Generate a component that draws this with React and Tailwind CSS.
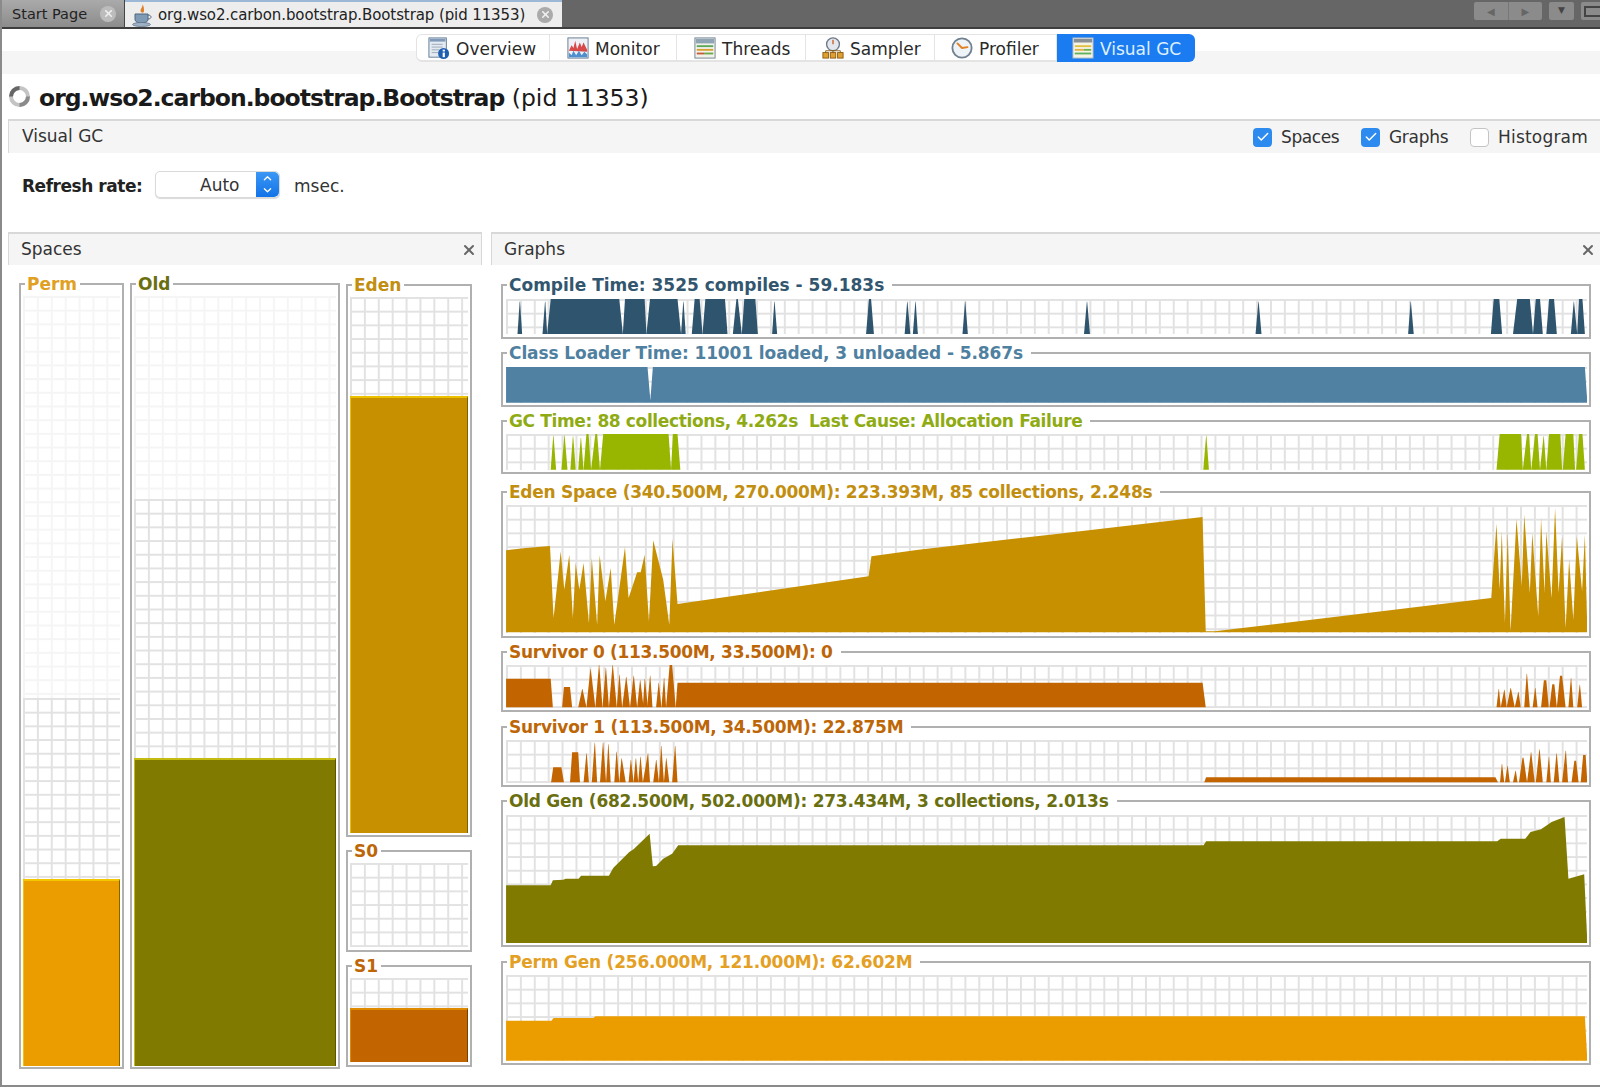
import React from 'react';
import { X, ChevronUp, ChevronDown, Check } from 'lucide-react';

const FONT = "font-['DejaVu_Sans',sans-serif]";
const GRID = 'bg-[linear-gradient(#e2e2e2_1.5px,transparent_1.5px),linear-gradient(90deg,#e2e2e2_1.5px,transparent_1.5px)] [background-size:13.9px_13.7px]';
const GRID_FADED = 'bg-[linear-gradient(#f5f5f5_1.5px,transparent_1.5px),linear-gradient(90deg,#f5f5f5_1.5px,transparent_1.5px)] [background-size:13.9px_13.7px]';

// chart x values were read off two crops of the plot, left half and right half
const L = (x) => x / 2.8 - 16;
const R = (x) => x / 2.851 + 544;

const trapezoids = (list, toX, y0, y1) =>
    list.map(([a, b, c, d, top]) => {
        const h = y1 - y0;
        const t = top - y0;
        return `${toX(a)},${h / 3} ${toX(b)},${t / 3} ${toX(c)},${t / 3} ${toX(d)},${h / 3}`;
    });

const outline = (left, right, y0, y1) => {
    const pts = [...left.map(([x, y]) => [L(x), y]), ...right.map(([x, y]) => [R(x), y])];
    const h = (y1 - y0) / 3;
    return [`${pts[0][0]},${h} ` + pts.map(([x, y]) => `${x},${(y - y0) / 3}`).join(' ') + ` ${pts[pts.length - 1][0]},${h}`];
};

const compile = [
    ...trapezoids([
        [77, 83, 84, 90, 95], [147, 154, 155, 160, 95], [160, 170, 362, 372, 87], [372, 378, 433, 438, 87],
        [438, 448, 525, 535, 87], [535, 541, 542, 548, 95], [565, 573, 587, 595, 87], [595, 603, 658, 665, 87],
        [680, 690, 694, 705, 87], [705, 712, 743, 750, 87], [790, 796, 797, 804, 95], [1053, 1061, 1067, 1075, 87],
        [1161, 1168, 1169, 1177, 95], [1184, 1191, 1192, 1198, 95], [1323, 1330, 1331, 1338, 95],
    ], L, 87, 192),
    ...trapezoids([
        [97, 105, 106, 114, 95], [586, 594, 595, 603, 95], [1021, 1028, 1029, 1037, 95], [1257, 1265, 1281, 1289, 87],
        [1320, 1332, 1368, 1377, 87], [1377, 1385, 1397, 1405, 87], [1415, 1423, 1437, 1445, 87],
        [1485, 1493, 1494, 1503, 95], [1503, 1508, 1518, 1525, 87],
    ], R, 87, 192),
];

const classLoader = outline(
    [[45, 290], [441, 290], [449, 390], [456, 290]],
    [[1525, 290], [1532, 397]],
    290, 397,
);

const gcTime = [
    ...trapezoids([
        [170, 177, 178, 185, 498], [200, 208, 209, 217, 497], [225, 232, 233, 240, 500], [247, 254, 255, 262, 505],
        [262, 270, 276, 283, 493], [283, 295, 300, 308, 493], [308, 317, 500, 507, 493], [507, 512, 525, 533, 493],
    ], L, 493, 600),
    ...trapezoids([
        [437, 445, 446, 453, 498], [1273, 1282, 1343, 1348, 493], [1348, 1360, 1366, 1372, 493], [1372, 1383, 1390, 1397, 493],
        [1397, 1407, 1408, 1415, 500], [1415, 1423, 1455, 1460, 493], [1462, 1470, 1492, 1497, 493], [1500, 1508, 1518, 1525, 493],
    ], R, 493, 600),
];

const eden = outline(
    [[45, 842], [100, 835], [168, 829], [178, 1045], [198, 845], [208, 960], [222, 855], [232, 1045], [240, 880], [250, 960],
     [262, 880], [277, 1060], [285, 865], [300, 1065], [307, 857], [323, 995], [338, 895], [348, 1065], [378, 832], [388, 985],
     [412, 908], [422, 908], [433, 855], [445, 1055], [457, 812], [485, 930], [502, 1065], [511, 808], [525, 1003],
     [1060, 920], [1068, 860], [1200, 840]],
    [[0, 795], [435, 742], [444, 1085], [470, 1085], [1258, 985], [1273, 762], [1282, 960], [1288, 785], [1297, 1060], [1305, 785],
     [1313, 1085], [1330, 748], [1345, 950], [1352, 735], [1368, 970], [1375, 790], [1392, 1040], [1400, 745], [1410, 970], [1415, 785],
     [1430, 985], [1440, 715], [1450, 970], [1460, 800], [1470, 1075], [1480, 870], [1492, 1050], [1502, 800], [1517, 965], [1525, 795], [1532, 1088]],
    706, 1088,
);

const spike = (a, p, d, top) => [a, p, p + 1, d, top];

const survivor0 = [
    ...trapezoids([
        [45, 45, 170, 176, 117], [202, 207, 224, 230, 142], spike(247, 258, 270, 148), spike(270, 281, 295, 88),
        spike(295, 305, 315, 76), spike(315, 324, 333, 85), spike(333, 343, 355, 76), spike(355, 362, 370, 105),
        spike(370, 381, 392, 112), spike(392, 402, 412, 108), spike(412, 420, 430, 122), spike(428, 433, 442, 118),
        spike(440, 448, 455, 108), spike(465, 472, 480, 130), spike(480, 487, 493, 115), [493, 503, 510, 520, 76],
    ], L, 76, 203),
    `${L(520)},42.3 ${L(525)},17.7 ${R(435)},17.7 ${R(444)},42.3`,
    ...trapezoids([
        spike(1273, 1279, 1285, 148), spike(1285, 1295, 1302, 150), spike(1302, 1313, 1325, 145), spike(1325, 1335, 1342, 157),
        spike(1352, 1359, 1368, 102), spike(1376, 1383, 1390, 145), [1400, 1408, 1415, 1422, 122], [1424, 1432, 1438, 1445, 134],
        [1445, 1454, 1460, 1470, 108], spike(1478, 1485, 1492, 115), spike(1503, 1510, 1517, 135),
    ], R, 76, 203),
];

const survivor1 = [
    ...trapezoids([
        [171, 177, 200, 207, 382], [224, 230, 247, 252, 337], spike(262, 270, 277, 340), spike(285, 293, 300, 308),
        spike(308, 316, 325, 308), spike(325, 331, 338, 313), spike(348, 354, 362, 335), spike(362, 368, 380, 355),
        spike(388, 394, 402, 360), spike(402, 408, 415, 355), spike(415, 421, 428, 350), spike(428, 442, 448, 340),
        spike(457, 465, 473, 360), spike(473, 479, 487, 318), spike(487, 493, 502, 355), spike(510, 518, 525, 318),
    ], L, 300, 427),
    ...trapezoids([
        [440, 445, 1270, 1277, 412], spike(1283, 1288, 1295, 372), spike(1297, 1304, 1311, 378), spike(1320, 1327, 1333, 392),
        [1337, 1347, 1350, 1360, 353], spike(1360, 1371, 1382, 337), spike(1385, 1395, 1405, 328), spike(1415, 1422, 1428, 352),
        spike(1436, 1444, 1452, 340), spike(1460, 1470, 1477, 332), [1487, 1495, 1500, 1507, 362], [1513, 1520, 1527, 1532, 345],
    ], R, 300, 427),
];

const oldGen = outline(
    [[45, 735], [170, 735], [176, 720], [205, 718], [212, 715], [248, 715], [255, 706], [333, 706], [345, 683], [390, 635],
     [402, 627], [447, 580], [456, 678], [465, 677], [485, 655], [510, 640], [527, 615]],
    [[438, 615], [445, 603], [1275, 603], [1285, 595], [1355, 595], [1370, 575], [1400, 567], [1430, 545], [1467, 530], [1478, 715], [1523, 702], [1532, 908]],
    524, 908,
);

const permGen = outline(
    [[45, 1142], [172, 1142], [178, 1134], [290, 1134], [295, 1129]],
    [[1525, 1129], [1532, 1262]],
    1005, 1262,
);

const charts = [
    { label: 'Compile Time: 3525 compiles - 59.183s', text: 'text-[#33566f]', fill: '#2f556e', box: 'h-[55px]', pad: 'pt-[13px]', plot: 'h-[35px]', height: 35, shapes: compile },
    { label: 'Class Loader Time: 11001 loaded, 3 unloaded - 5.867s', text: 'text-[#4f80a0] tracking-[-0.1px]', fill: '#5081a3', box: 'h-[55px] mt-[13px]', pad: 'pt-[13px]', plot: 'h-[36px]', height: 36, shapes: classLoader },
    { label: 'GC Time: 88 collections, 4.262s  Last Cause: Allocation Failure', text: 'text-[#8fab14] tracking-[-0.37px]', fill: '#98b500', box: 'h-[54px] mt-[13px]', pad: 'pt-[12px]', plot: 'h-[36px]', height: 36, shapes: gcTime },
    { label: 'Eden Space (340.500M, 270.000M): 223.393M, 85 collections, 2.248s', text: 'text-[#c28e10] tracking-[-0.28px]', fill: '#c79000', box: 'h-[147px] mt-[17px]', pad: 'pt-[12px]', plot: 'h-[128px]', height: 128, shapes: eden },
    { label: 'Survivor 0 (113.500M, 33.500M): 0', text: 'text-[#bd6608] tracking-[-0.31px]', fill: '#c26500', box: 'h-[61px] mt-[13px]', pad: 'pt-[12px]', plot: 'h-[43px]', height: 43, shapes: survivor0 },
    { label: 'Survivor 1 (113.500M, 34.500M): 22.875M', text: 'text-[#bd6608] tracking-[-0.26px]', fill: '#c26500', box: 'h-[61px] mt-[14px]', pad: 'pt-[12px]', plot: 'h-[43px]', height: 43, shapes: survivor1 },
    { label: 'Old Gen (682.500M, 502.000M): 273.434M, 3 collections, 2.013s', text: 'text-[#6a6f10] tracking-[-0.25px]', fill: '#807b00', box: 'h-[147px] mt-[13px]', pad: 'pt-[13px]', plot: 'h-[128px]', height: 128, shapes: oldGen },
    { label: 'Perm Gen (256.000M, 121.000M): 62.602M', text: 'text-[#e4a024] tracking-[-0.21px]', fill: '#eb9d00', box: 'h-[104px] mt-[14px]', pad: 'pt-[12px]', plot: 'h-[86px]', height: 86, shapes: permGen },
];

const GraphBox = ({ label, text, fill, box, pad, plot, height, shapes }) => (
    <div className={`relative border-2 border-[#b0b0b0] pl-[3px] ${pad} ${box}`}>
        <span className={`absolute left-[4px] -top-[11px] h-[20px] bg-white pl-[2px] pr-[8px] text-[17px] leading-[20px] font-bold whitespace-pre ${text}`}>
            {label}
        </span>
        <div className={`relative w-[1081px] ${plot} ${GRID}`}>
            <svg width="1081" height={height} viewBox={`0 0 1081 ${height}`} className="absolute inset-0">
                {shapes.map((points, i) => (
                    <polygon key={i} points={points} fill={fill} />
                ))}
            </svg>
        </div>
    </div>
);

const SpaceBox = ({ label, text, box, faded, fill, fillClass, fillH, pb = 'pb-[1px]' }) => (
    <div className={`relative border-2 border-[#b0b0b0] pt-[11px] pl-[2px] pr-[2px] flex flex-col ${pb} ${box}`}>
        <span className={`absolute left-[4px] -top-[11px] h-[20px] bg-white pl-[2px] pr-[3px] text-[17px] leading-[20px] font-bold ${text}`}>
            {label}
        </span>
        <div className="flex flex-col flex-1">
            {faded && <div className={`shrink-0 ${faded} ${GRID_FADED}`} />}
            <div className={`flex-1 ${GRID}`} />
            {fill && <div className={`shrink-0 border-t-2 border-l border-r ${fillH} ${fillClass}`} />}
        </div>
    </div>
);

const IconOverview = () => (
    <svg width="22" height="22" viewBox="0 0 24 24">
        <rect x="1" y="1" width="19" height="21" fill="#e4eaf2" stroke="#5f7893" />
        <rect x="2" y="2" width="17" height="3" fill="#7e9ab8" />
        <path d="M4 8h12M4 11h12M4 14h8M4 17h7" stroke="#9aa6b4" />
        <circle cx="17" cy="18" r="6" fill="#1f5fb0" />
        <rect x="16" y="17" width="2.4" height="5" fill="#fff" />
        <rect x="16" y="13.8" width="2.4" height="2" fill="#fff" />
    </svg>
);

const IconMonitor = () => (
    <svg width="22" height="22" viewBox="0 0 24 24">
        <rect x="1" y="1" width="22" height="22" fill="#eef2f7" stroke="#60758c" />
        <path d="M2 15 5 9l2 3 2-8 2 9 3-7 2 5 2-5 4 8v2z" fill="#d8494a" />
        <path d="M2 22v-5l3 3 2-5 3 5 3-5 3 5 3-4 3 3v3z" fill="#4f8fd0" />
    </svg>
);

const IconThreads = () => (
    <svg width="22" height="22" viewBox="0 0 24 24">
        <rect x="1" y="1" width="22" height="22" fill="#f2f2ea" stroke="#6d7d8c" />
        <rect x="2" y="2" width="20" height="5" fill="#8fa4b4" />
        <path d="M3 10h18" stroke="#5aa65a" strokeWidth="2" />
        <path d="M3 14h18" stroke="#d8a030" strokeWidth="2" />
        <path d="M3 18h8" stroke="#c85a3a" strokeWidth="2" />
        <path d="M11 18h10" stroke="#6aa84a" strokeWidth="2" />
    </svg>
);

const IconSampler = () => (
    <svg width="22" height="22" viewBox="0 0 24 24">
        <circle cx="12" cy="8" r="7" fill="#e4e8ee" stroke="#6d7a88" strokeWidth="1.5" />
        <path d="M12 3v5" stroke="#c8602a" strokeWidth="1.5" />
        <rect x="1" y="17" width="6" height="6" fill="#e0a030" stroke="#8a5a10" />
        <rect x="9" y="17" width="6" height="6" fill="#e0a030" stroke="#8a5a10" />
        <rect x="17" y="17" width="6" height="6" fill="#e0a030" stroke="#8a5a10" />
        <path d="M4 17v-2h16v2M12 15v2" stroke="#8a5a10" fill="none" />
    </svg>
);

const IconProfiler = () => (
    <svg width="22" height="22" viewBox="0 0 24 24">
        <circle cx="12" cy="12" r="10.5" fill="#eef3f8" stroke="#70808f" strokeWidth="2" />
        <path d="M12 12 7 7M12 12l6-1" stroke="#e08020" strokeWidth="2" strokeLinecap="round" />
    </svg>
);

const IconVisualGc = () => (
    <svg width="22" height="22" viewBox="0 0 24 24">
        <rect x="1" y="1" width="22" height="22" fill="#f5f3e4" stroke="#9fb4c8" />
        <rect x="2" y="2" width="20" height="4" fill="#8a8f94" />
        <path d="M3 10h18" stroke="#e0c040" strokeWidth="2" />
        <path d="M3 14h10" stroke="#e0b040" strokeWidth="2" />
        <path d="M13 14h8" stroke="#70b050" strokeWidth="2" />
        <path d="M3 18h18" stroke="#60b060" strokeWidth="2" />
    </svg>
);

const IconJava = () => (
    <svg width="22" height="24" viewBox="0 0 22 24" className="shrink-0">
        <path d="M11 1c2 3-3 5-1 8 1 1 3 1 3-1 0-3 0-5-2-7z" fill="#e0802a" />
        <path d="M4 11h13v5c0 3-3 4-6.500 4S4 19 4 16z" fill="#7f9ab4" stroke="#4d667e" />
        <path d="M17 12c4 0 4 4 0 4" fill="none" stroke="#4d667e" />
        <ellipse cx="10.500" cy="21.500" rx="9" ry="2" fill="#9fb2c4" stroke="#5a7088" strokeWidth="0.7" />
    </svg>
);

const CloseDot = ({ className }) => (
    <span className={`flex shrink-0 items-center justify-center w-[16px] h-[16px] rounded-full ${className}`}>
        <X size={11} strokeWidth={3.5} color="#f0f0f0" />
    </span>
);

const ViewTab = ({ icon, label, className, active }) => (
    <div className={`flex items-center gap-[6px] h-[28px] ${active ? 'bg-[#1a7cf0] text-[#dff0ff] rounded-r-[6px]' : 'bg-white text-[#2a2a2a] border-r border-b-2 border-t border-[#e4e4e4]'} ${className}`}>
        {icon}
        <span className="pt-[4px] text-[17px]">{label}</span>
    </div>
);

const CheckOption = ({ label, checked, className }) => (
    <div className={`flex items-center gap-[9px] ${className}`}>
        {checked ? (
            <span className="flex items-center justify-center w-[19px] h-[19px] rounded-[4px] bg-[#2d8bf0]">
                <Check size={14} strokeWidth={2.5} color="#fff" />
            </span>
        ) : (
            <span className="w-[19px] h-[19px] rounded-[4px] bg-white border border-[#c4c4c4]" />
        )}
        <span className="pt-[2px] text-[17px] text-[#333]">{label}</span>
    </div>
);

const App = () => {
    return (
        <div className={`relative w-[1600px] h-[1087px] overflow-hidden bg-white border-l-2 border-b-2 border-[#8a8a8a] ${FONT}`}>
            {/* window tabs */}
            <div className="flex h-[29px] -ml-[2px] w-[1600px] bg-[#666666] border-b-2 border-[#3e3e3e]">
                <div className="flex items-center w-[125px] pl-[12px] bg-[linear-gradient(#aaaaaa,#8c8c8c)] border-r border-[#444]">
                    <span className="w-[88px] pt-[2px] text-[14.500px] text-[#222]">Start Page</span>
                    <CloseDot className="bg-[#bcbcbc]" />
                </div>
                <div className="flex items-center w-[437px] pl-[6px] bg-[#ededed] border-t-2 border-[#9db8d6]">
                    <IconJava />
                    <span className="shrink-0 w-[379px] pt-[1px] ml-[5px] text-[15px] tracking-[-0.1px] text-[#222] whitespace-nowrap">org.wso2.carbon.bootstrap.Bootstrap (pid 11353)</span>
                    <CloseDot className="bg-[#aaaaaa]" />
                </div>
                <div className="flex-1 flex justify-end pt-[2px] gap-[7px]">
                    <div className="flex w-[68px] h-[18px] rounded-[2px] bg-[#8b8b8b]">
                        <span className="flex-1 flex items-center justify-center border-r border-[#777] text-[#666] text-[10px]">◀</span>
                        <span className="flex-1 flex items-center justify-center text-[#666] text-[10px]">▶</span>
                    </div>
                    <div className="flex items-center justify-center w-[25px] h-[18px] rounded-[2px] bg-[#8b8b8b] text-[#444] text-[9px]">▼</div>
                    <div className="flex items-center justify-center w-[19px] h-[18px] rounded-l-[2px] bg-[#8b8b8b] pl-[3px]">
                        <span className="w-full h-[11px] border-2 border-[#444] border-r-0" />
                    </div>
                </div>
            </div>

            {/* view switcher */}
            <div className="h-[45px] -ml-[2px] bg-[linear-gradient(#ffffff_22px,#f5f5f5_22px)] pl-[416px] pt-[5px]">
                <div className="flex">
                    <ViewTab icon={<IconOverview />} label="Overview" className="w-[134px] pl-[11px] rounded-l-[6px] border-l" />
                    <ViewTab icon={<IconMonitor />} label="Monitor" className="w-[127px] pl-[17px]" />
                    <ViewTab icon={<IconThreads />} label="Threads" className="w-[129px] pl-[17px]" />
                    <ViewTab icon={<IconSampler />} label="Sampler" className="w-[129px] pl-[16px]" />
                    <ViewTab icon={<IconProfiler />} label="Profiler" className="w-[122px] pl-[16px]" />
                    <ViewTab icon={<IconVisualGc />} label="Visual GC" className="w-[138px] pl-[15px]" active />
                </div>
            </div>

            {/* title */}
            <div className="flex items-center h-[45px] pl-[6px]">
                <svg width="23" height="23" viewBox="0 0 23 23">
                    <circle cx="11.500" cy="11.500" r="8.500" fill="none" stroke="#c4c4c4" strokeWidth="4" />
                    <path d="M3 11.500a8.500 8.500 0 0 1 8.500-8.500" fill="none" stroke="#666" strokeWidth="4" />
                    <path d="M11.500 20a8.500 8.500 0 0 0 8.500-8.500" fill="none" stroke="#8a8a8a" strokeWidth="4" />
                </svg>
                <span className="ml-[8px] pt-[4px] text-[23.500px] text-[#1a1a1a] whitespace-pre">
                    <span className="font-bold tracking-[-1px]">org.wso2.carbon.bootstrap.Bootstrap</span> (pid 11353)
                </span>
            </div>

            {/* section header */}
            <div className="flex items-center justify-between h-[34px] ml-[6px] pl-[13px] bg-[#f5f5f5] border-t-2 border-l border-[#d8d8d8]">
                <span className="text-[17px] text-[#333]">Visual GC</span>
                <div className="flex">
                    <CheckOption label="Spaces" checked className="w-[108px] tracking-[-0.4px]" />
                    <CheckOption label="Graphs" checked className="w-[109px] tracking-[-0.3px]" />
                    <CheckOption label="Histogram" className="w-[130px] tracking-[0.2px]" />
                </div>
            </div>

            {/* refresh rate */}
            <div className="flex items-center h-[79px] pl-[20px] pb-[17px]">
                <span className="w-[133px] pt-[5px] text-[17px] font-bold tracking-[-0.47px] text-[#222]">Refresh rate:</span>
                <div className="flex w-[125px] h-[27px] rounded-[5px] bg-white border border-[#dadada] shadow-[0_1px_1px_rgba(0,0,0,0.15)]">
                    <span className="flex-1 pl-[44px] text-[17px] leading-[26px] text-[#333]">Auto</span>
                    <span className="flex flex-col items-center justify-center w-[23px] rounded-r-[5px] bg-[linear-gradient(#3c97f5,#1273e8)]">
                        <ChevronUp size={13} strokeWidth={2.5} color="#fff" />
                        <ChevronDown size={13} strokeWidth={2.5} color="#fff" />
                    </span>
                </div>
                <span className="ml-[14px] pt-[5px] text-[17px] text-[#333]">msec.</span>
            </div>

            {/* panels */}
            <div className="flex ml-[6px] h-[820px]">
                <div className="w-[474px] shrink-0">
                    <div className="flex items-center justify-between h-[33px] pl-[12px] pr-[4px] bg-[#f5f5f5] border-t-2 border-l border-r border-[#d8d8d8]">
                        <span className="text-[17px] text-[#333]">Spaces</span>
                        <X size={16} strokeWidth={3} color="#666" />
                    </div>
                    <div className="flex pl-[11px] pt-[18px] gap-[6px]">
                        <SpaceBox label="Perm" text="text-[#dfa024]" box="w-[105px] h-[786px]" faded="h-[402px]" fill fillH="h-[187px]" fillClass="bg-[#eb9d00] border-t-[#f2c700] border-l-[#f2c700] border-r-[#8a6200]" />
                        <SpaceBox label="Old" text="text-[#6a6f10]" box="w-[210px] h-[786px]" faded="h-[203px]" fill fillH="h-[308px]" fillClass="bg-[#807b00] border-t-[#c4bc10] border-l-[#c4bc10] border-r-[#5a5600]" />
                        <div className="flex flex-col w-[126px] mt-[1px]">
                            <SpaceBox label="Eden" text="text-[#c28e10]" box="h-[553px]" fill fillH="h-[437px]" fillClass="bg-[#c79000] border-t-[#ecc200] border-l-[#ecc200] border-r-[#7a6200]" pb="pb-[2px]" />
                            <SpaceBox label="S0" text="text-[#bd6608]" box="h-[102px] mt-[13px]" pb="pb-[3px]" />
                            <SpaceBox label="S1" text="text-[#bd6608]" box="h-[102px] mt-[13px]" fill fillH="h-[54px]" fillClass="bg-[#c26500] border-t-[#e08a00] border-l-[#e08a00] border-r-[#7a4000]" pb="pb-[3px]" />
                        </div>
                    </div>
                </div>

                <div className="flex-1 ml-[9px]">
                    <div className="flex items-center justify-between h-[33px] pl-[12px] pr-[4px] bg-[#f5f5f5] border-t-2 border-l border-[#d8d8d8]">
                        <span className="text-[17px] text-[#333]">Graphs</span>
                        <X size={16} strokeWidth={3} color="#666" />
                    </div>
                    <div className="pl-[10px] pt-[19px] w-[1100px]">
                        {charts.map((chart) => (
                            <GraphBox key={chart.label} {...chart} />
                        ))}
                    </div>
                </div>
            </div>
        </div>
    );
};

export default App;
